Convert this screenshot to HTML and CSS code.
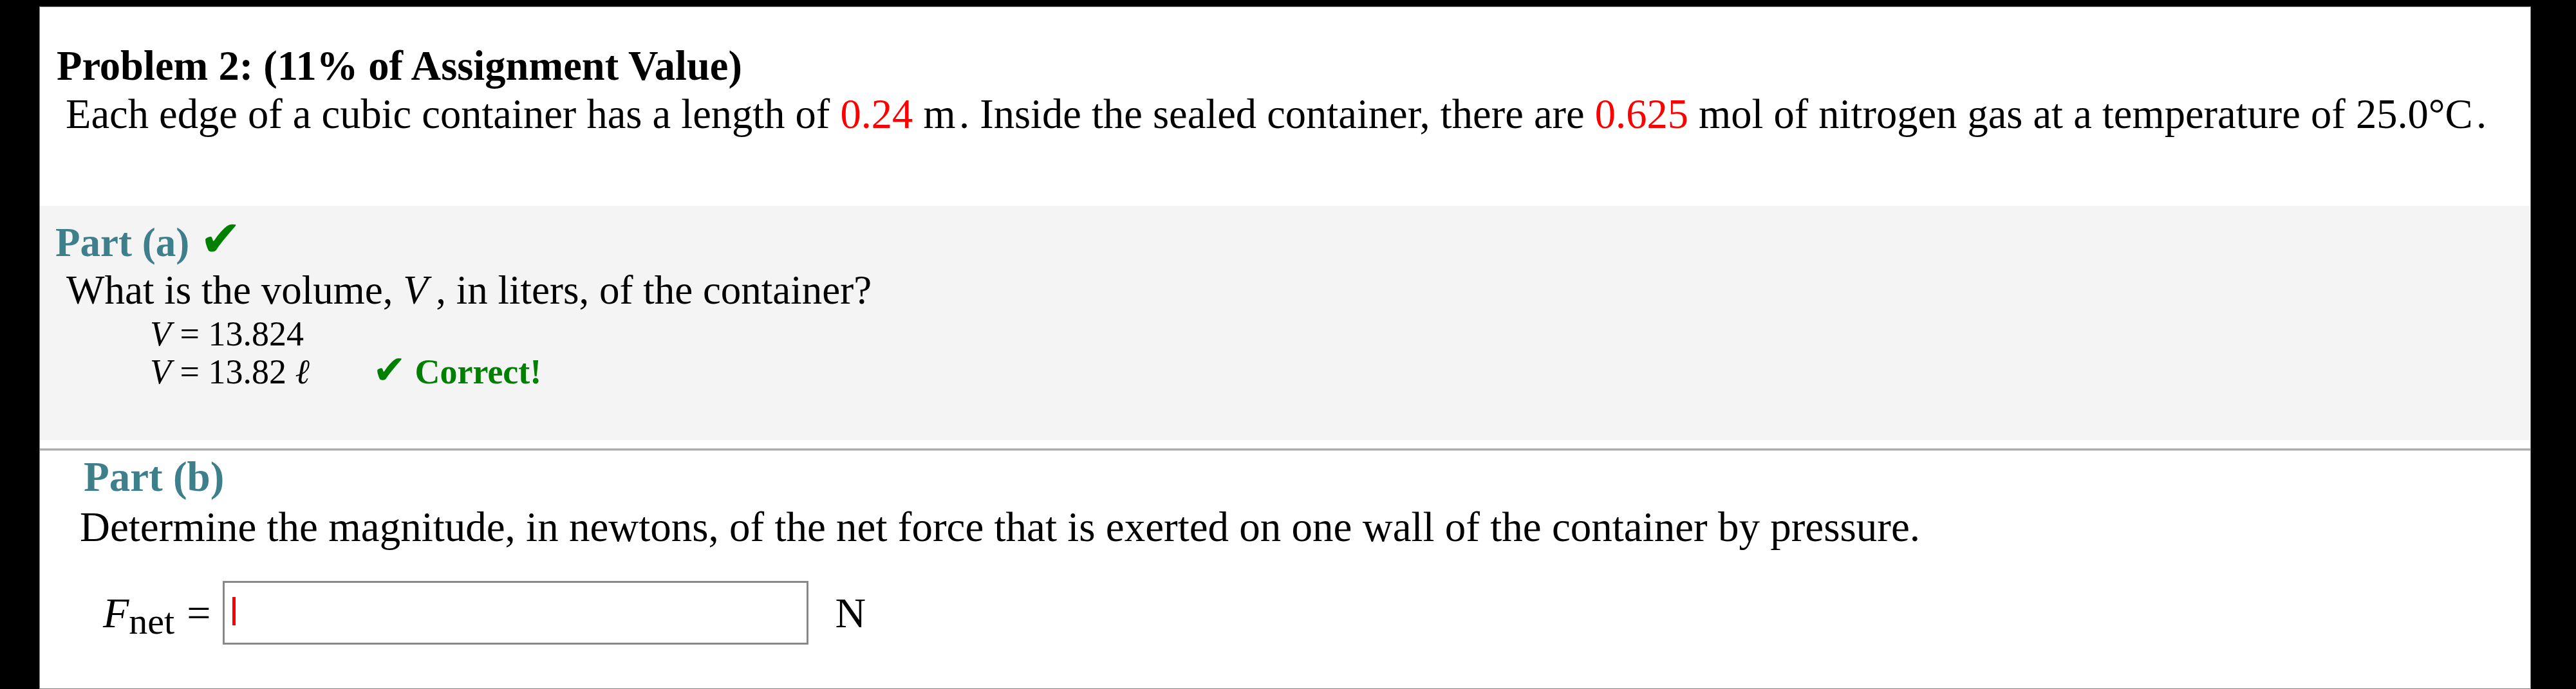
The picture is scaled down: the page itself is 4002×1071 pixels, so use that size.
FILE: index.html
```html
<!DOCTYPE html>
<html lang="en">
<head>
<meta charset="utf-8">
<title>Problem 2</title>
<link rel="stylesheet" href="styles.css">
</head>
<body>
<div class="panel">
  <div class="problem">
    <div class="title">Problem 2: (11% of Assignment Value)</div>
    <div class="statement">Each edge of a cubic container has a length of <span class="given">0.24</span> m&#8202;. Inside the sealed container, there are <span class="given">0.625</span> mol of nitrogen gas at a temperature of 25.0°C&#8202;.</div>
  </div>

  <div class="part part-done">
    <div class="part-title">Part (a) <span class="check">✔</span></div>
    <div class="question">What is the volume, <i>V</i>&#8201;, in liters, of the container?</div>
    <div class="answers">
      <div class="ans"><i>V</i> = 13.824</div>
      <div class="ans"><i>V</i> = 13.82 <i class="unit">ℓ</i><span class="correct"><span class="check small">✔</span> Correct!</span></div>
    </div>
  </div>

  <div class="sep"></div>

  <div class="part part-open">
    <div class="part-title b">Part (b)</div>
    <div class="question">Determine the magnitude, in newtons, of the net force that is exerted on one wall of the container by pressure.</div>
    <div class="input-row">
      <span class="var"><i>F</i><sub>net</sub></span>
      <span class="eq">=</span>
      <div class="field"><span class="caret"></span></div>
      <span class="units">N</span>
    </div>
  </div>
</div>
</body>
</html>
```

FILE: styles.css
```css
html, body {
  margin: 0;
  padding: 0;
  background: #000;
}

body {
  font-family: "Liberation Serif", "Times New Roman", serif;
  color: #000;
  overflow: hidden;
}

.panel {
  box-sizing: border-box;
  margin: 10px 0 0 61px;
  width: 3871px;
  height: 1061px;
  background: #fff;
  border: 1px solid #808080;
}

.problem {
  padding: 54px 0 0 26px;
  height: 253px;
  box-sizing: border-box;
  font-size: 64.5px;
  line-height: 75px;
}

.title {
  font-weight: bold;
}

.statement {
  margin-left: 14px;
  white-space: nowrap;
}

.given {
  color: #ff0000;
}

.part-done {
  margin-top: 56px;
  background: #f4f4f4;
  padding: 20px 0 76px 24px;
  height: 364px;
  box-sizing: border-box;
  font-size: 63px;
  line-height: 74px;
}

.part-title {
  font-weight: bold;
  color: #3d7f8b;
}

.check {
  font-family: "DejaVu Sans", sans-serif;
  color: #008000;
  font-weight: bold;
  font-size: 78px;
  line-height: 0;
}

.question {
  margin-left: 17px;
  white-space: nowrap;
}

.answers {
  margin: 2px 0 0 147px;
  font-size: 54px;
  line-height: 59px;
}

.unit {
  font-style: italic;
}

.correct {
  margin-left: 98px;
  color: #008000;
  font-weight: bold;
}

.check.small {
  font-size: 62px;
}

.sep {
  margin-top: 13px;
  height: 3px;
  background: #acacac;
  border-bottom: 1px solid #dcdcdc;
}

.part-open {
  padding: 3px 0 0 62px;
  font-size: 65px;
  line-height: 74px;
}

.part-title.b {
  margin-left: 6px;
}

.part-open .question {
  margin: 4px 0 0 0;
}

.input-row {
  margin: 47px 0 0 36px;
  display: flex;
  align-items: center;
  font-size: 66px;
  line-height: 1;
}

.var i {
  font-family: "Liberation Serif", serif;
  font-style: italic;
}

.var sub {
  font-family: "Liberation Serif", serif;
  font-size: 58px;
  vertical-align: -10px;
  line-height: 0;
}

.eq {
  margin: 0 19px 0 19px;
}

.field {
  box-sizing: border-box;
  width: 910px;
  height: 99px;
  border: 3px solid #888;
  background: #fff;
  display: flex;
  align-items: center;
  padding-left: 12px;
}

.caret {
  display: block;
  width: 5px;
  height: 44px;
  background: #ff0000;
  margin-top: -6px;
}

.units {
  margin-left: 41px;
}
```
